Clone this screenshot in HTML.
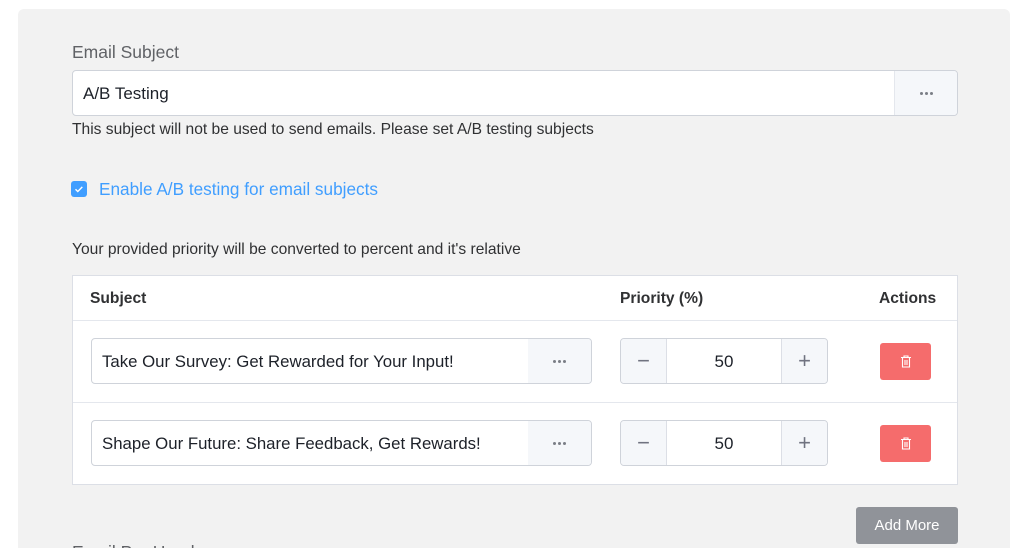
<!DOCTYPE html>
<html style="height:548px;overflow:hidden"><head><style>
*{box-sizing:border-box;margin:0;padding:0}
body{width:1024px;height:548px;overflow:hidden;background:#fff;font-family:"Liberation Sans",Arial,sans-serif;position:relative;color:#1d2129}
.panel{position:absolute;left:18px;top:9px;width:992px;height:560px;background:#f2f2f2;border-radius:6px}
.abs{position:absolute;white-space:nowrap}
.inp{position:absolute;background:#fff;border:1px solid #cfd3da;border-radius:4px;overflow:hidden}
.dots{position:absolute;right:0;top:0;bottom:0;background:#f5f7fa;display:flex;align-items:center;justify-content:center;gap:2px}
.dots i{width:3px;height:3px;border-radius:50%;background:#7a7e86;display:block}
.tbl{position:absolute;left:72px;top:275px;width:886px;height:210px;background:#fff;border:1px solid #dcdfe6}
.row{position:absolute;left:0;right:0;border-top:1px solid #e4e7ed}
.num .side{position:absolute;top:0;bottom:0;width:46px;background:#f5f7fa;display:flex;align-items:center;justify-content:center;color:#707380;font-size:22px;font-weight:300}
.del{position:absolute;left:807px;width:51px;height:37px;background:#f56c6c;border-radius:3px;display:flex;align-items:center;justify-content:center}
</style></head><body>
<div class="panel"></div>
<div class="abs" style="left:72px;top:42px;font-size:17.5px;color:#606266">Email Subject</div>
<div class="inp" style="left:72px;top:70px;width:886px;height:46px">
 <div class="abs" style="left:10px;top:13px;font-size:17px;color:#1d2129">A/B Testing</div>
 <div class="dots" style="width:63px;border-left:1px solid #e4e7ed"><i></i><i></i><i></i></div>
</div>
<div class="abs" style="left:72px;top:121px;font-size:15.6px;color:#303133">This subject will not be used to send emails. Please set A/B testing subjects</div>
<div class="abs" style="left:71px;top:181px;width:16px;height:16px;background:#409eff;border-radius:3px">
 <svg width="16" height="16" viewBox="0 0 16 16"><path d="M4.5 8.2l2.3 2.3 4.5-4.6" stroke="#fff" stroke-width="1.4" fill="none"/></svg>
</div>
<div class="abs" style="left:99px;top:179px;font-size:17.2px;color:#409eff">Enable A/B testing for email subjects</div>
<div class="abs" style="left:72px;top:241px;font-size:15.6px;color:#303133">Your provided priority will be converted to percent and it's relative</div>
<div class="tbl">
 <div class="abs" style="left:17px;top:14px;font-size:15.6px;font-weight:bold;color:#303133">Subject</div>
 <div class="abs" style="left:547px;top:14px;font-size:15.6px;font-weight:bold;color:#303133">Priority (%)</div>
 <div class="abs" style="left:806px;top:14px;font-size:15.6px;font-weight:bold;color:#303133">Actions</div>
 <div class="row" style="top:44px;height:82px">
  <div class="inp" style="left:18px;top:17px;width:501px;height:46px"><div class="abs" style="left:10px;top:13px;font-size:16.8px">Take Our Survey: Get Rewarded for Your Input!</div><div class="dots" style="width:63px"><i></i><i></i><i></i></div></div>
  <div class="inp num" style="left:547px;top:17px;width:208px;height:46px"><div class="side" style="left:0;border-right:1px solid #dcdfe6">−</div><div class="abs" style="left:46px;right:46px;top:13px;text-align:center;font-size:17px">50</div><div class="side" style="right:0;border-left:1px solid #dcdfe6">+</div></div>
  <div class="del" style="top:22px"><svg width="12" height="13" viewBox="0 0 12 13" fill="none" stroke="#fff" stroke-width="1.1"><path d="M1 2.5h10M4 2.5V1h4v1.5M2.5 2.5v9.5h7V2.5M5 5v5M7 5v5"/></svg></div>
 </div>
 <div class="row" style="top:126px;height:82px">
  <div class="inp" style="left:18px;top:17px;width:501px;height:46px"><div class="abs" style="left:10px;top:13px;font-size:16.8px">Shape Our Future: Share Feedback, Get Rewards!</div><div class="dots" style="width:63px"><i></i><i></i><i></i></div></div>
  <div class="inp num" style="left:547px;top:17px;width:208px;height:46px"><div class="side" style="left:0;border-right:1px solid #dcdfe6">−</div><div class="abs" style="left:46px;right:46px;top:13px;text-align:center;font-size:17px">50</div><div class="side" style="right:0;border-left:1px solid #dcdfe6">+</div></div>
  <div class="del" style="top:22px"><svg width="12" height="13" viewBox="0 0 12 13" fill="none" stroke="#fff" stroke-width="1.1"><path d="M1 2.5h10M4 2.5V1h4v1.5M2.5 2.5v9.5h7V2.5M5 5v5M7 5v5"/></svg></div>
 </div>
</div>
<div class="abs" style="left:856px;top:507px;width:102px;height:37px;background:#909399;border-radius:3px;color:#fff;font-size:15px;display:flex;align-items:center;justify-content:center">Add More</div>
<div class="abs" style="left:72px;top:542px;font-size:17.5px;color:#606266">Email Pre Header</div>
</body></html>
